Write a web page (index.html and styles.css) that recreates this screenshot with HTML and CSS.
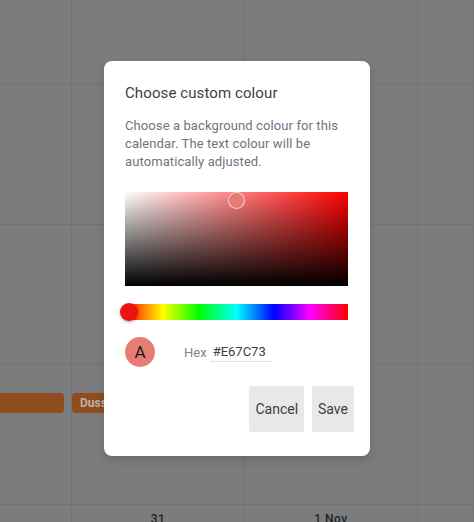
FILE: index.html
```html
<!DOCTYPE html>
<html>
<head>
<meta charset="utf-8">
<link rel="stylesheet" href="styles.css">
</head>
<body>
<div class="cal">
  <div class="cell"></div><div class="cell"></div><div class="cell"></div><div class="cell"></div>
  <div class="cell"></div><div class="cell"></div><div class="cell"></div><div class="cell"></div>
  <div class="cell"></div><div class="cell"></div><div class="cell"></div><div class="cell"></div>
  <div class="cell chips"><div class="chip"></div></div>
  <div class="cell chips"><div class="chip chip-wide">Duss</div></div>
  <div class="cell"></div><div class="cell"></div>
  <div class="cell day"></div>
  <div class="cell day">31</div>
  <div class="cell day">1 Nov</div>
  <div class="cell day"></div>
</div>

<div class="dialog">
  <h1 class="title">Choose custom colour</h1>
  <p class="desc">Choose a background colour for this calendar. The text colour will be automatically adjusted.</p>
  <div class="sat">
    <div class="sat-thumb"></div>
  </div>
  <div class="hue">
    <div class="hue-thumb"></div>
  </div>
  <div class="hex-row">
    <div class="swatch">A</div>
    <span class="hex-label">Hex</span>
    <div class="hex-input">#E67C73</div>
  </div>
  <div class="actions">
    <div class="btn">Cancel</div>
    <div class="btn">Save</div>
  </div>
</div>
</body>
</html>
```

FILE: styles.css
```css
html, body {
  margin: 0;
  padding: 0;
  width: 474px;
  height: 522px;
  overflow: hidden;
  font-family: Roboto, "Liberation Sans", sans-serif;
}

body {
  position: relative;
  background: #7b7c7d;
}

.cal {
  display: grid;
  grid-template-columns: 72px 173px 173px 1fr;
  grid-template-rows: 85px 140px 140px 140px 1fr;
  height: 522px;
}

.cell {
  border-right: 1px solid #727374;
  border-bottom: 1px solid #727374;
  min-width: 0;
}

.chips {
  padding-top: 28px;
  overflow: hidden;
}

.chip {
  height: 20px;
  background: #8f4c1d;
  border-radius: 0 4px 4px 0;
  margin-right: 7px;
}

.chip-wide {
  border-radius: 4px;
  color: #bdb2a8;
  font-weight: 700;
  font-size: 12px;
  line-height: 20px;
  padding-left: 8px;
}

.day {
  text-align: center;
  padding-top: 7px;
  font-size: 12px;
  font-weight: 500;
  color: #232425;
  letter-spacing: 0.5px;
  border-bottom: none;
}

.dialog {
  position: absolute;
  left: 104px;
  top: 61px;
  width: 266px;
  height: 395px;
  box-sizing: border-box;
  padding: 22px 22px 24px 21px;
  background: #fff;
  border-radius: 8px;
  box-shadow: 0 4px 10px rgba(0, 0, 0, 0.15);
  display: flex;
  flex-direction: column;
}

.title {
  margin: 0;
  font-size: 15px;
  line-height: 20px;
  font-weight: 400;
  color: #3c4043;
  letter-spacing: 0.1px;
}

.desc {
  margin: 14px 0 0;
  font-size: 13px;
  line-height: 18px;
  color: #70757a;
  letter-spacing: 0.1px;
}

.sat {
  position: relative;
  margin-top: 21px;
  height: 94px;
  background:
    linear-gradient(to top, #000, rgba(0, 0, 0, 0)),
    linear-gradient(to right, #fff, #ff0000);
}

.sat-thumb {
  position: absolute;
  left: 103px;
  top: 0;
  width: 15px;
  height: 15px;
  border: 1.5px solid rgba(255, 255, 255, 0.65);
  border-radius: 50%;
  background: #e67c73;
}

.hue {
  position: relative;
  margin-top: 18px;
  height: 16px;
  background: linear-gradient(to right, #ff0000 0%, #ffff00 17%, #00ff00 33%, #00ffff 50%, #0000ff 67%, #ff00ff 83%, #ff0000 100%);
}

.hue-thumb {
  position: absolute;
  left: -5px;
  top: -1px;
  width: 18px;
  height: 18px;
  border-radius: 50%;
  background: #ee1111;
  box-shadow: 0 1px 3px rgba(0, 0, 0, 0.35);
}

.hex-row {
  display: flex;
  align-items: center;
  margin-top: 17px;
}

.swatch {
  width: 30px;
  height: 30px;
  border-radius: 50%;
  background: #e67c73;
  color: #1a1a1a;
  font-size: 17px;
  line-height: 30px;
  text-align: center;
}

.hex-label {
  margin-left: 29px;
  font-size: 13px;
  color: #80868b;
}

.hex-input {
  margin-left: 4px;
  width: 58px;
  padding-left: 2px;
  font-size: 13px;
  line-height: 18px;
  color: #3c4043;
  border-bottom: 1px dotted #c4c7c9;
}

.actions {
  display: flex;
  justify-content: flex-end;
  gap: 8px;
  margin-top: auto;
  margin-right: -6px;
}

.btn {
  height: 46px;
  line-height: 46px;
  padding: 0 6px;
  background: #e8e8e8;
  border-radius: 2px;
  font-size: 14px;
  color: #3c4043;
}
```
